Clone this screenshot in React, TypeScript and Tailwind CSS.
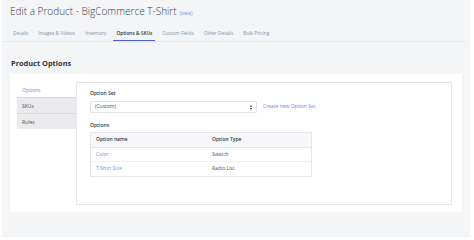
const tabs = ["Details", "Images & Videos", "Inventory", "Options & SKUs", "Custom Fields", "Other Details", "Bulk Pricing"];

const sideTabs = ["Options", "SKUs", "Rules"];

const options = [
  { name: "Color", type: "Swatch" },
  { name: "T-Shirt Size", type: "Radio List" },
];

export default function App() {
  return (
    <div className="w-[474px] h-[240px] bg-white overflow-hidden" style={{ fontFamily: '"Open Sans", "Noto Sans", sans-serif' }}>
      <div className="ml-[2px] w-[468px] h-[237px] bg-[#f4f5f7] pt-[3px]">
        {/* header */}
        <div className="flex items-baseline gap-[3px] pl-[8px] h-[16px]">
          <h1 className="text-[10px] font-light text-[#3a3d4a] leading-[16px]">Edit a Product - BigCommerce T-Shirt</h1>
          <span className="text-[4.8px] text-[#6f86e8]">(view)</span>
        </div>

        {/* tabs */}
        <div className="mt-[10px] mr-[5px] flex gap-[10px] pl-[11px] border-b border-[#e6e8ee] h-[13px]">
          {tabs.map((t) => (
            <div
              key={t}
              className={
                t === "Options & SKUs"
                  ? "relative text-[4.8px] leading-[9px] text-[#313440] font-semibold after:absolute after:-left-[3px] after:-right-[3px] after:top-[10.5px] after:h-[1.5px] after:bg-[#4b5fd8]"
                  : "text-[4.8px] leading-[9px] text-[#8a90a6]"
              }
            >
              {t}
            </div>
          ))}
        </div>

        <h2 className="mt-[16px] pl-[9px] text-[7.4px] font-bold text-[#313440] leading-[10px]">Product Options</h2>

        {/* panel */}
        <div className="mt-[6px] ml-[8px] w-[452px] h-[138px] bg-white pt-[8px] pl-[7px] flex">
          <div className="w-[59px] pt-[1px]">
            {sideTabs.map((s, i) => (
              <div
                key={s}
                className={
                  i === 0
                    ? "h-[14px] pl-[5px] text-[5px] leading-[14px] text-[#6f86e8] bg-white"
                    : "h-[16px] pl-[5px] text-[5px] leading-[16px] text-[#4a4d5a] bg-[#ebebed] border-t border-[#d9d9dd]"
                }
              >
                {s}
              </div>
            ))}
          </div>

          <div className="w-[376px] h-[123px] border border-[#e6e7eb] pl-[13px] pt-[6px]">
            <div className="text-[5px] font-semibold text-[#313440] leading-[8px]">Option Set</div>
            <div className="mt-[4px] flex items-center gap-[6px]">
              <div className="w-[167px] h-[12px] border border-[#e2e3e8] rounded-[1px] flex items-center justify-between px-[4px]">
                <span className="text-[5px] text-[#4a4d5a]">(Custom)</span>
                <span className="flex flex-col gap-[1px]">
                  <span className="w-0 h-0 border-l-[1.5px] border-r-[1.5px] border-b-[2px] border-transparent border-b-[#333]" />
                  <span className="w-0 h-0 border-l-[1.5px] border-r-[1.5px] border-t-[2px] border-transparent border-t-[#333]" />
                </span>
              </div>
              <span className="text-[5px] text-[#6f86e8]">Create new Option Set</span>
            </div>

            <div className="mt-[8px] text-[5px] font-semibold text-[#313440] leading-[8px]">Options</div>
            <div className="mt-[3px] w-[222px] border border-[#e6e7eb]">
              <div className="h-[15px] bg-[#f7f7f9] border-b border-[#e6e7eb] flex items-center text-[5px] font-semibold text-[#313440]">
                <span className="w-[121px] pl-[5px]">Option name</span>
                <span>Option Type</span>
              </div>
              {options.map((o, i) => (
                <div
                  key={o.name}
                  className={"h-[14px] flex items-center text-[5px] " + (i === 0 ? "border-b border-[#eeeff2]" : "")}
                >
                  <span className="w-[121px] pl-[5px] text-[#7b90ea]">{o.name}</span>
                  <span className="text-[#4a4d5a]">{o.type}</span>
                </div>
              ))}
            </div>
          </div>
        </div>
      </div>
    </div>
  );
}
